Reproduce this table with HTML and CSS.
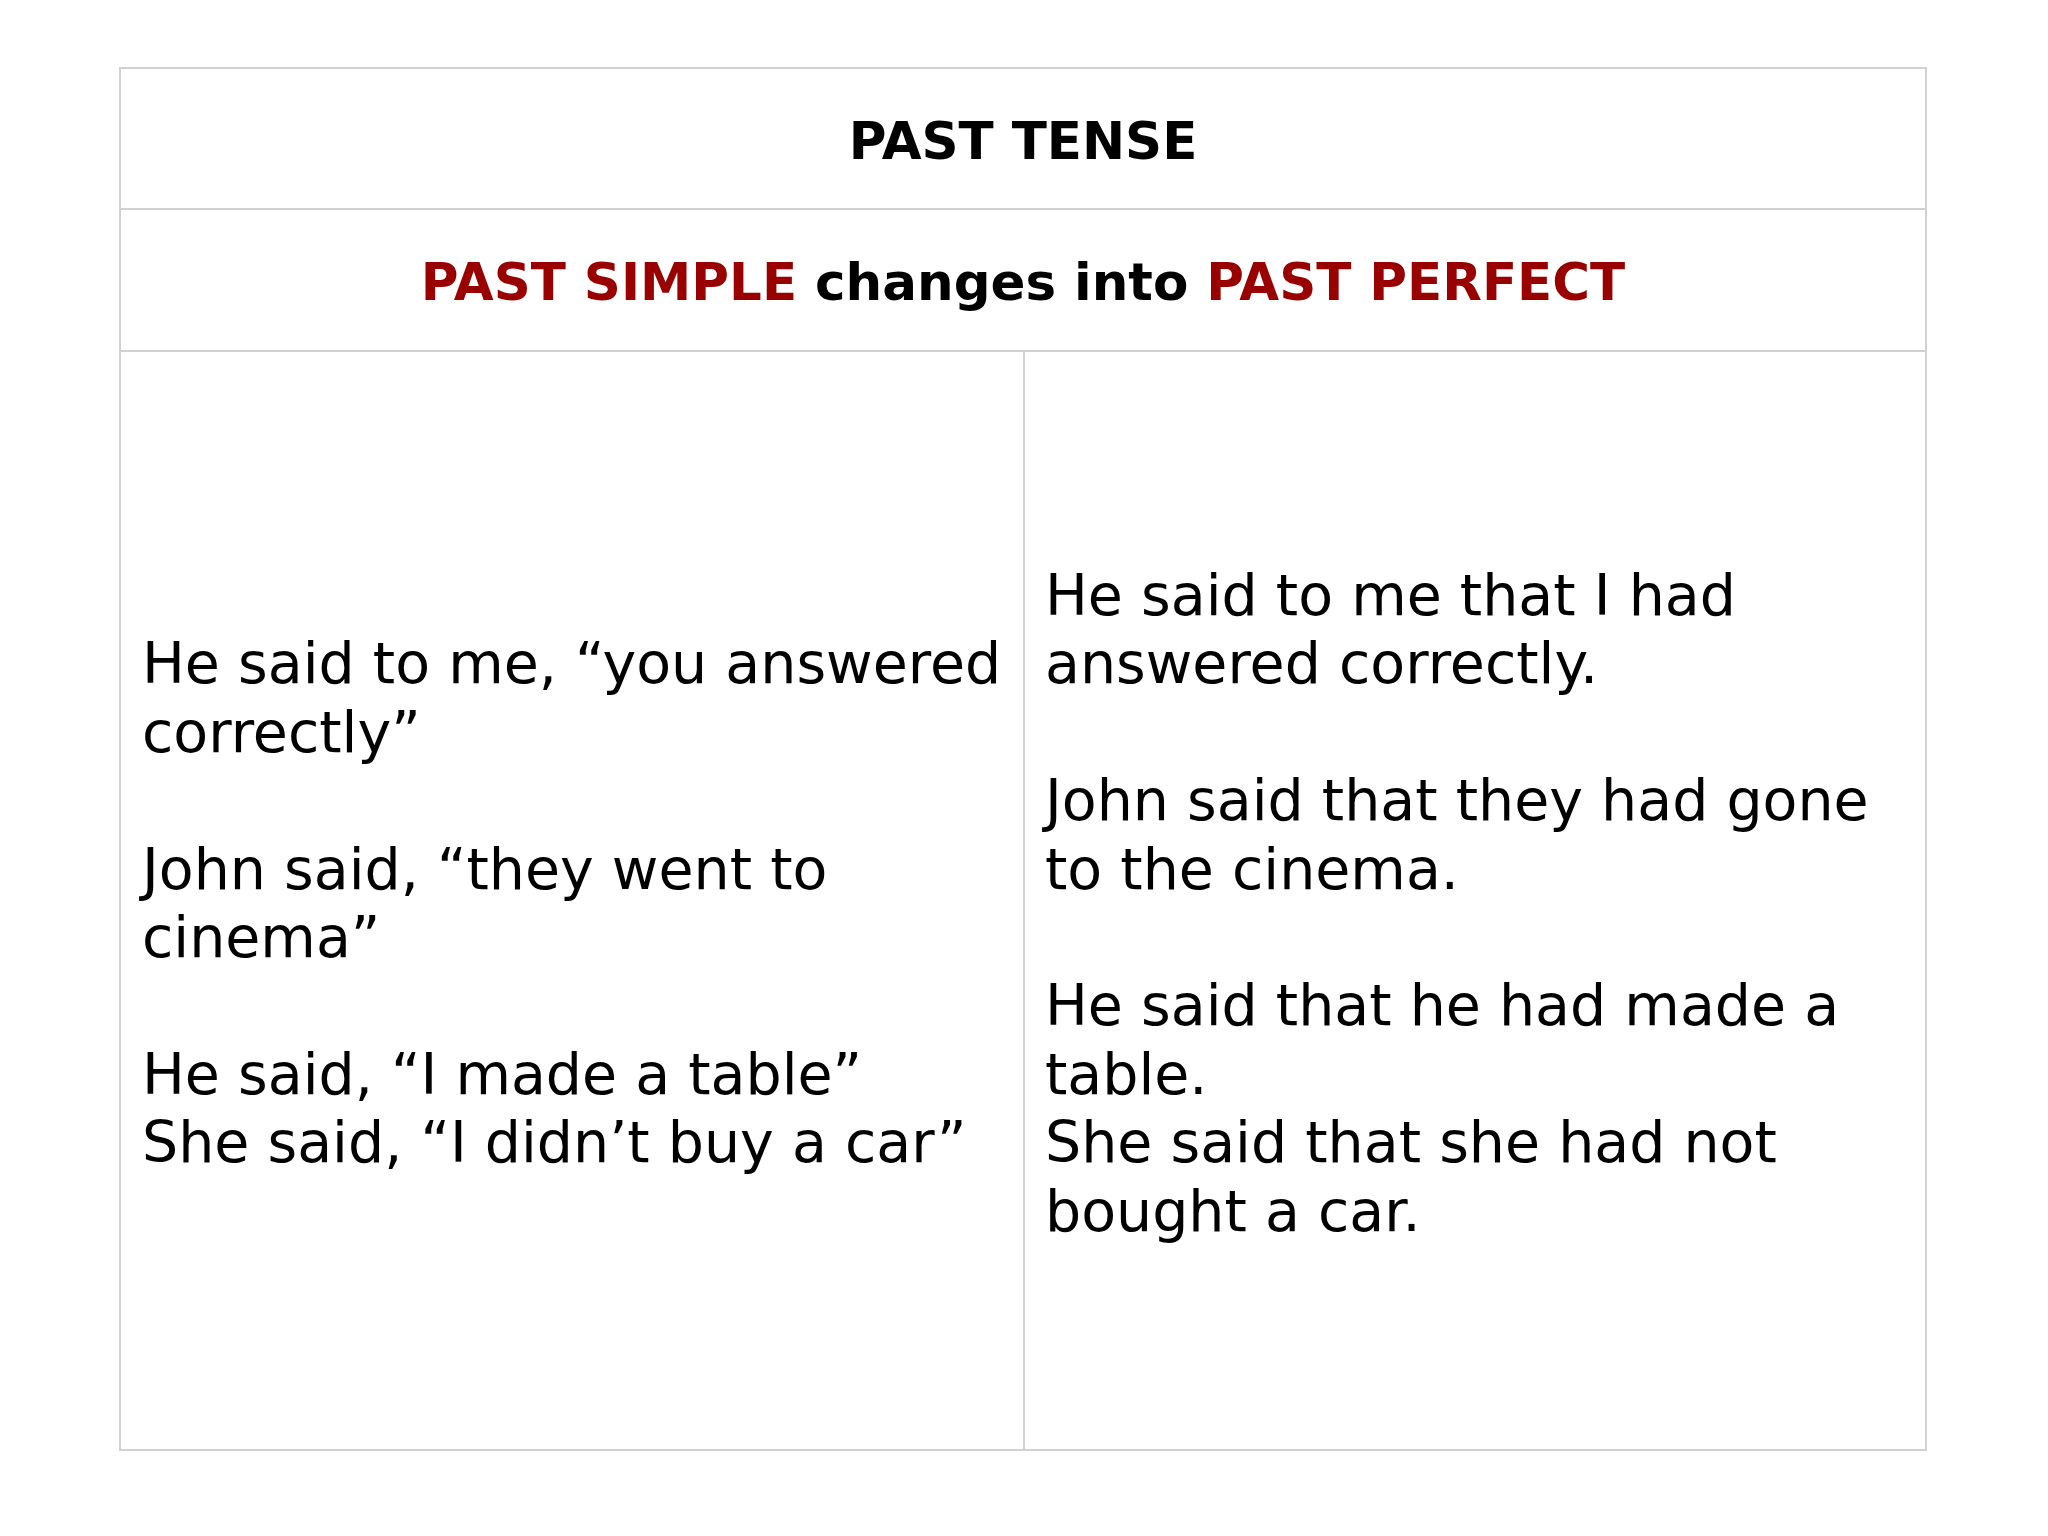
FILE: index.html
```html
<!DOCTYPE html>
<html lang="en">
<head>
<meta charset="utf-8">
<title>Past Tense</title>
<link rel="stylesheet" href="styles.css">
</head>
<body>
<div class="sheet">
  <div class="table">
    <div class="cell head"><span>PAST TENSE</span></div>
    <div class="cell head"><span><span class="red">PAST SIMPLE</span> changes into <span class="red">PAST PERFECT</span></span></div>
    <div class="cell body left">
      <p>He said to me, “you answered<br>correctly”</p>
      <p class="gap">John said, “they went to<br>cinema”</p>
      <p class="gap">He said, “I made a table”<br>She said, “I didn’t buy a car”</p>
    </div>
    <div class="cell body right">
      <p>He said to me that I had<br>answered correctly.</p>
      <p class="gap">John said that they had gone<br>to the cinema.</p>
      <p class="gap">He said that he had made a<br>table.<br>She said that she had not<br>bought a car.</p>
    </div>
  </div>
</div>
</body>
</html>
```

FILE: styles.css
```css
html, body {
  margin: 0;
  padding: 0;
  background: #ffffff;
}
.sheet {
  padding: 67px 0 0 119px;
}
.table {
  box-sizing: border-box;
  width: 1808px;
  height: 1384px;
  border: 2px solid #d0d0d0;
  display: grid;
  grid-template-columns: 904px 1fr;
  grid-template-rows: 141px 142px 1fr;
  font-family: "DejaVu Sans", Verdana, sans-serif;
  color: #000;
}
.head {
  grid-column: 1 / 3;
  border-bottom: 2px solid #d0d0d0;
  display: flex;
  align-items: center;
  justify-content: center;
  padding-top: 4px;
  font-weight: bold;
  font-size: 51.5px;
  white-space: nowrap;
}
.red {
  color: #990000;
}
.body {
  display: flex;
  flex-direction: column;
  justify-content: center;
  padding: 5px 0 0 20px;
  font-size: 57px;
  line-height: 1.2;
  white-space: nowrap;
}
.left {
  border-right: 2px solid #d0d0d0;
  padding-left: 21px;
}
.body p {
  margin: 0;
}
.body p.gap {
  margin-top: 68.4px;
}
```
